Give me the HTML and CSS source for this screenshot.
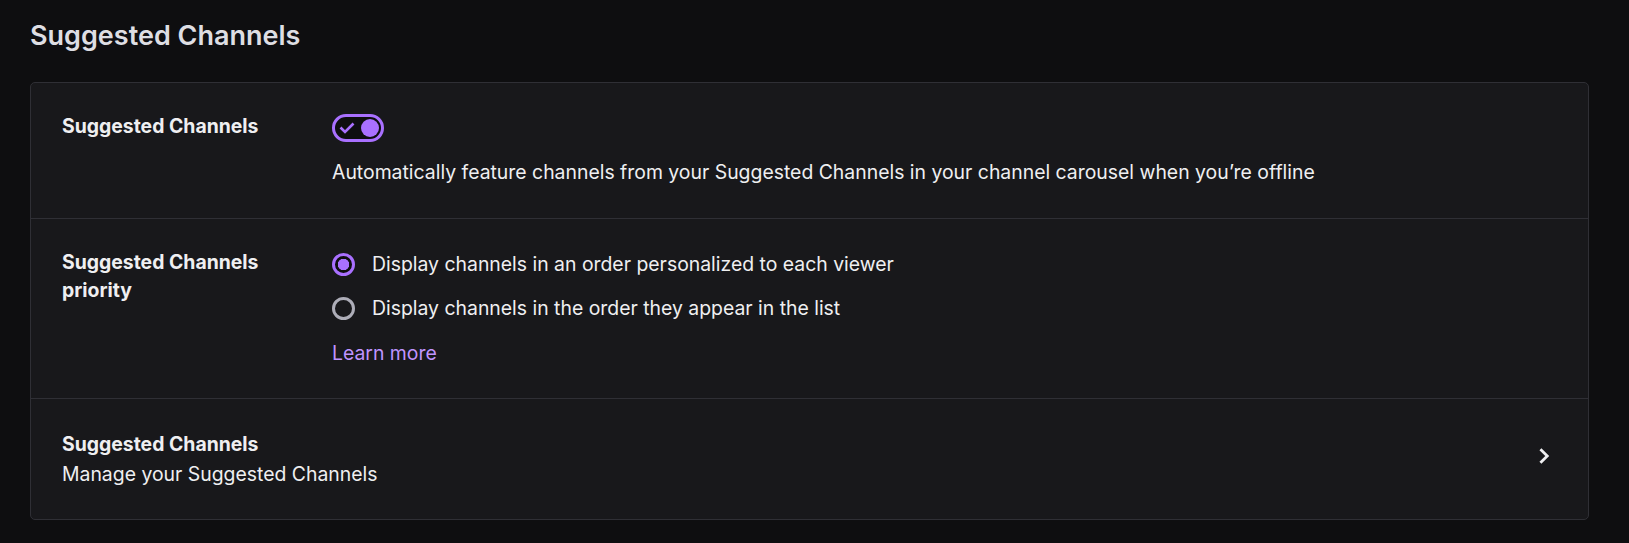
FILE: index.html
```html
<!DOCTYPE html>
<html lang="en">
<head>
<meta charset="utf-8">
<title>Suggested Channels</title>
<link rel="stylesheet" href="styles.css">
</head>
<body>
<main class="page">
  <h2 class="page-title">Suggested Channels</h2>
  <section class="card">
    <div class="row">
      <div class="row-label">Suggested Channels</div>
      <div class="row-control">
        <div class="toggle-wrap">
          <span class="toggle" role="switch" aria-checked="true">
            <svg class="toggle-check" width="16" height="12" viewBox="0 0 16 12"><polyline points="1.5,5.5 6,10 14.5,1.5" fill="none" stroke="#a970ff" stroke-width="2.6"/></svg>
            <span class="toggle-knob"></span>
          </span>
        </div>
        <p class="desc">Automatically feature channels from your Suggested Channels in your channel carousel when you’re offline</p>
      </div>
    </div>
    <div class="row row-radios">
      <div class="row-label">Suggested Channels priority</div>
      <div class="row-control radios">
        <label class="radio-item"><span class="radio radio-on"></span><span>Display channels in an order personalized to each viewer</span></label>
        <label class="radio-item"><span class="radio"></span><span>Display channels in the order they appear in the list</span></label>
        <a class="link" href="#">Learn more</a>
      </div>
    </div>
    <div class="row row-nav">
      <div class="nav-text">
        <div class="nav-title">Suggested Channels</div>
        <div class="nav-sub">Manage your Suggested Channels</div>
      </div>
      <svg class="chevron" width="26" height="26" viewBox="0 0 20 20"><path d="M6.5 5.5 11 10l-4.5 4.5L8 16l6-6-6-6-1.5 1.5z" fill="#efeff1"/></svg>
    </div>
  </section>
</main>
</body>
</html>
```

FILE: styles.css
```css
* { box-sizing: border-box; }
html, body { margin: 0; padding: 0; }
body {
  background: #0e0e10;
  color: #efeff1;
  font-family: Inter, "Noto Sans", sans-serif;
  font-size: 19.4px;
}
.page {
  padding: 21px 40px 26px 30px;
}
.page-title {
  margin: 0 0 32px 0;
  font-size: 27px;
  line-height: 29px;
  font-weight: 600;
  color: #dedee3;
}
.card {
  background: #18181b;
  border: 1px solid #2f2f35;
  border-radius: 5px;
}
.row {
  display: flex;
  padding: 29px 31px 31px 31px;
  border-bottom: 1px solid #2f2f35;
}
.row:last-child { border-bottom: none; }
.row-label {
  flex: 0 0 270px;
  padding-right: 20px;
  font-weight: 700;
  line-height: 28px;
}
.row-control {
  flex: 1;
  display: flex;
  flex-direction: column;
}
.toggle-wrap {
  height: 30px;
  display: flex;
  align-items: center;
  margin-top: 1px;
}
.toggle {
  position: relative;
  display: flex;
  align-items: center;
  justify-content: space-between;
  width: 52px;
  height: 28px;
  border: 3px solid #a970ff;
  border-radius: 14px;
  background: #0e0e10;
  padding: 0 2px 0 4px;
}
.toggle-check { display: block; }
.toggle-knob {
  width: 18px;
  height: 18px;
  border-radius: 50%;
  background: #a970ff;
}
.desc {
  margin: 14px 0 0 0;
  line-height: 30px;
}
.row-radios { padding-bottom: 30px; }
.radios { gap: 14px; padding-top: 1px; }
.radio-item {
  display: flex;
  align-items: center;
  gap: 17px;
  height: 30px;
  line-height: 30px;
}
.radio {
  width: 23px;
  height: 23px;
  border-radius: 50%;
  border: 3px solid #adadb8;
  flex: 0 0 23px;
}
.radio-on {
  border-color: #a970ff;
  background: radial-gradient(circle, #a970ff 0 5.5px, #0e0e10 6px);
}
.link {
  color: #bf94ff;
  text-decoration: none;
  line-height: 30px;
  height: 30px;
  margin-top: 1px;
}
.row-nav {
  align-items: center;
  justify-content: space-between;
  padding-top: 30px;
  padding-bottom: 30px;
}
.nav-title {
  font-weight: 700;
  line-height: 30px;
}
.nav-sub {
  line-height: 30px;
}
.chevron {
  display: block;
  margin-bottom: 7px;
}
```
